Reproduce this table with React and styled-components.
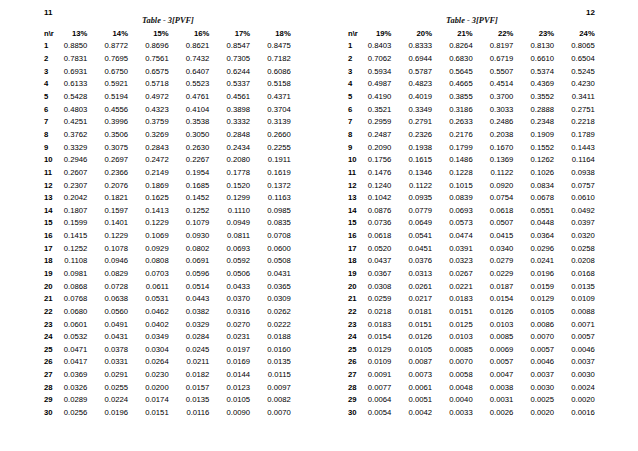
import React from "react";
import styled, { createGlobalStyle } from "styled-components";

const GlobalStyle = createGlobalStyle`
  html, body {
    margin: 0;
    padding: 0;
    background: #ffffff;
  }
  body {
    font-family: "Liberation Sans", Arial, sans-serif;
    color: #000000;
  }
`;

const leftRates = [13, 14, 15, 16, 17, 18];
const rightRates = [19, 20, 21, 22, 23, 24];
const years = Array.from({ length: 30 }, (_, i) => i + 1);

// present value factor 1 / (1 + r)^n
const pvf = (rate, n) => (1 / Math.pow(1 + rate / 100, n)).toFixed(4);

export default function App() {
  return (
    <>
      <GlobalStyle />
      <Spread>
        <PvfPage pageNo={11} rates={leftRates} align="left" />
        <PvfPage pageNo={12} rates={rightRates} align="right" />
      </Spread>
    </>
  );
}

function PvfPage({ pageNo, rates, align }) {
  return (
    <Page>
      <PageNumber align={align}>{pageNo}</PageNumber>
      <Title>Table - 3[PVF]</Title>
      <Table>
        <HeadCell first>n\r</HeadCell>
        {rates.map((r) => (
          <HeadCell key={r}>{r}%</HeadCell>
        ))}
        {years.map((n) => (
          <React.Fragment key={n}>
            <YearCell>{n}</YearCell>
            {rates.map((r) => (
              <ValueCell key={r}>{pvf(r, n)}</ValueCell>
            ))}
          </React.Fragment>
        ))}
      </Table>
    </Page>
  );
}

const Spread = styled.div`
  display: flex;
  gap: 57px;
  padding: 8px 0 0 44px;
  width: 638px;
  height: 451px;
  box-sizing: border-box;
`;

const Page = styled.div`
  width: 247px;
  display: flex;
  flex-direction: column;
`;

const PageNumber = styled.div`
  font-size: 8px;
  line-height: 9px;
  font-weight: bold;
  text-align: ${(props) => props.align};
`;

const Title = styled.div`
  font-family: "Liberation Serif", "Times New Roman", serif;
  font-style: italic;
  font-weight: bold;
  font-size: 8.4px;
  line-height: 8px;
  text-align: center;
  margin: 0 0 2px 1px;
  color: #111111;
`;

const Table = styled.div`
  display: grid;
  grid-template-columns: 16px 27.3px repeat(5, 40.7px);
  grid-auto-rows: 12.645px;
  align-items: center;
  font-size: 7.7px;
`;

const HeadCell = styled.div`
  font-weight: bold;
  text-align: ${(props) => (props.first ? "left" : "right")};
  white-space: nowrap;
`;

const YearCell = styled.div`
  font-weight: bold;
  white-space: nowrap;
`;

const ValueCell = styled.div`
  text-align: right;
  white-space: nowrap;
  color: #000000;
`;
